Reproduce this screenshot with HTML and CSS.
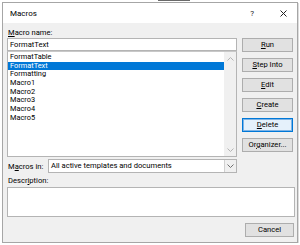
FILE: index.html
```html
<!DOCTYPE html>
<html>
<head>
<meta charset="utf-8">
<link rel="stylesheet" href="styles.css">
</head>
<body>
<div class="backdrop"><span class="bar"></span></div>
<div class="dialog">
  <div class="titlebar">
    <span class="title">Macros</span>
    <span class="help">?</span>
    <svg class="close" width="7" height="7" viewBox="0 0 7 7"><path d="M0.5 0.5 L6.5 6.5 M6.5 0.5 L0.5 6.5" stroke="#222" stroke-width="1" fill="none"/></svg>
  </div>
  <div class="content">
    <div class="top">
      <div class="left">
        <div class="label"><u>M</u>acro name:</div>
        <div class="textbox">FormatText</div>
        <div class="listbox">
          <ul class="items">
            <li>FormatTable</li>
            <li class="sel">FormatText</li>
            <li>Formatting</li>
            <li>Macro1</li>
            <li>Macro2</li>
            <li>Macro3</li>
            <li>Macro4</li>
            <li>Macro5</li>
          </ul>
          <div class="scrollbar">
            <svg width="7" height="4" viewBox="0 0 7 4"><path d="M0.5 3.5 L3.5 0.5 L6.5 3.5" stroke="#b4b4b4" fill="none"/></svg>
            <svg width="7" height="4" viewBox="0 0 7 4"><path d="M0.5 0.5 L3.5 3.5 L6.5 0.5" stroke="#b4b4b4" fill="none"/></svg>
          </div>
        </div>
      </div>
      <div class="buttons">
        <div class="btn"><u>R</u>un</div>
        <div class="btn"><u>S</u>tep Into</div>
        <div class="btn"><u>E</u>dit</div>
        <div class="btn"><u>C</u>reate</div>
        <div class="btn default"><u>D</u>elete</div>
        <div class="btn">Or<u>g</u>anizer...</div>
      </div>
    </div>
    <div class="macros-in">
      <span class="mlabel">M<u>a</u>cros in:</span>
      <div class="select">
        <span class="value">All active templates and documents</span>
        <span class="arrow"><svg width="7" height="4" viewBox="0 0 7 4"><path d="M0.5 0.5 L3.5 3.5 L6.5 0.5" stroke="#707070" fill="none"/></svg></span>
      </div>
    </div>
    <div class="label desc-label">Descr<u>i</u>ption:</div>
    <div class="desc"></div>
    <div class="footer"><div class="btn cancel">Cancel</div></div>
  </div>
</div>
</body>
</html>
```
FILE: styles.css
```css
* { box-sizing: border-box; }
body {
  margin: 0;
  background: #ffffff;
  font-family: Roboto, "Noto Sans", sans-serif;
  font-size: 7.6px;
  color: #000;
}
.backdrop {
  height: 2px;
  display: flex;
}
.bar {
  margin-left: 158px;
  width: 32px;
  height: 1px;
  background: #6a6a6a;
}
.dialog {
  margin-left: 2px;
  width: 296px;
  height: 241px;
  border: 1px solid #a6a6a6;
  background: #f0f0f0;
  box-shadow: 1px 1px 0 #dcdcdc;
  display: flex;
  flex-direction: column;
}
.titlebar {
  height: 20px;
  flex: none;
  background: #fff;
  display: flex;
  align-items: center;
  padding-left: 7px;
  font-size: 8px;
}
.title { flex: 1; }
.help {
  font-size: 8px;
  margin-right: 26px;
  color: #222;
}
.close { margin-right: 10px; }
.content {
  flex: 1;
  padding: 0 2px 0 4px;
  display: flex;
  flex-direction: column;
}
.top {
  display: flex;
  margin-top: 5px;
}
.left {
  width: 230px;
  display: flex;
  flex-direction: column;
}
.label {
  height: 10px;
  line-height: 10px;
  padding-left: 1px;
}
.textbox {
  height: 13px;
  border: 1px solid #b4b4b4;
  background: #fff;
  padding-left: 2px;
  line-height: 11px;
}
.listbox {
  height: 106px;
  border: 1px solid #b4b4b4;
  border-top-color: #c8c8c8;
  background: #fff;
  display: flex;
}
.items {
  list-style: none;
  margin: 0;
  padding: 1px 0 0 0;
  flex: 1;
  font-size: 7.4px;
}
.items li {
  height: 8.7px;
  line-height: 8.7px;
  padding-left: 2px;
}
.items li.sel {
  background: #0078d7;
  color: #fff;
}
.scrollbar {
  width: 12px;
  background: #f0f0f0;
  display: flex;
  flex-direction: column;
  justify-content: space-between;
  align-items: center;
  padding: 5px 0 4px;
}
.buttons {
  margin-left: 5px;
  padding-top: 10px;
  display: flex;
  flex-direction: column;
  gap: 6px;
}
.btn {
  width: 51px;
  height: 14px;
  border: 1px solid #adadad;
  background: #e1e1e1;
  text-align: center;
  line-height: 12px;
}
.btn.default {
  border-color: #0078d7;
  background: #e5f1fb;
  box-shadow: inset 0 0 0 1px #7fb4e6;
}
.macros-in {
  margin-top: 2px;
  display: flex;
  align-items: center;
  height: 14px;
}
.mlabel {
  width: 41px;
  padding-left: 1px;
}
.select {
  width: 189px;
  height: 14px;
  border: 1px solid #b4b4b4;
  background: #fff;
  display: flex;
  line-height: 12px;
}
.value {
  flex: 1;
  padding-left: 2px;
}
.arrow {
  width: 12px;
  background: #f0f0f0;
  border-left: 1px solid #d0d0d0;
  display: flex;
  align-items: center;
  justify-content: center;
}
.desc-label {
  margin-top: 3px;
}
.desc {
  margin-top: 1px;
  height: 30px;
  border: 1px solid #b4b4b4;
  background: #fff;
}
.footer {
  margin-top: 6px;
  display: flex;
  justify-content: flex-end;
}
.cancel {
  width: 49px;
  margin-right: 1px;
}
```
